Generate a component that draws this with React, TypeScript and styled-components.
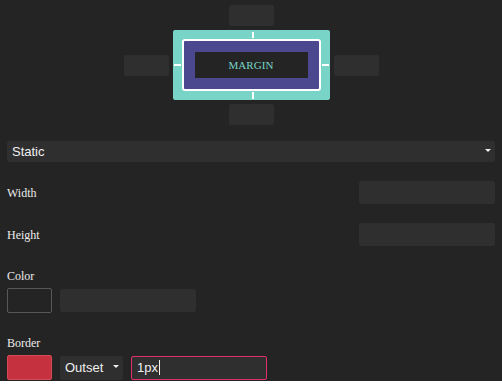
import React from 'react';
import styled, { createGlobalStyle } from 'styled-components';

const GlobalStyle = createGlobalStyle`
  html, body {
    margin: 0;
    padding: 0;
    background: #fff;
  }
  * {
    box-sizing: border-box;
  }
`;

const Panel = styled.div`
  height: 381px;
  overflow: hidden;
  background: #242424;
  padding: 5px 7px 0;
  color: #ececec;
  font-family: "Liberation Serif", "Times New Roman", serif;
`;

const Diagram = styled.div`
  display: flex;
  flex-direction: column;
  align-items: center;
  gap: 4px;
`;

const DiagramRow = styled.div`
  display: flex;
  align-items: center;
  gap: 4px;
`;

const SideBox = styled.div`
  width: 45px;
  height: 21px;
  background: #2f2f2f;
  border-radius: 2px;
`;

const MarginBox = styled.div`
  position: relative;
  width: 157px;
  height: 70px;
  padding: 9px;
  background: #78d4c6;
  border-radius: 2px;
`;

const Tick = styled.div<{ $side: 'top' | 'bottom' | 'left' | 'right' }>`
  position: absolute;
  background: #fff;
  ${({ $side }) => {
    switch ($side) {
      case 'top':
        return 'left: 79px; top: 2px; width: 2px; height: 6px;';
      case 'bottom':
        return 'left: 79px; bottom: 1px; width: 2px; height: 7px;';
      case 'left':
        return 'top: 34px; left: 1px; width: 7px; height: 2px;';
      case 'right':
        return 'top: 34px; right: 1px; width: 7px; height: 2px;';
    }
  }}
`;

const BorderBox = styled.div`
  width: 100%;
  height: 100%;
  border: 2px solid #fff;
  border-radius: 3px;
  background: #4b4890;
  padding: 11px;
`;

const ContentBox = styled.div`
  width: 100%;
  height: 100%;
  background: #242424;
  display: flex;
  align-items: center;
  justify-content: center;
  color: #78d4c6;
  font-size: 11px;
  letter-spacing: 0.1px;
`;

const Select = styled.div<{ $width?: number }>`
  display: flex;
  align-items: center;
  justify-content: space-between;
  width: ${({ $width }) => ($width ? `${$width}px` : '100%')};
  height: ${({ $width }) => ($width ? '24px' : '21px')};
  padding: 0 4px 0 5px;
  background: #2f2f2f;
  border-radius: 2px;
  color: #f0f0f0;
  font-family: "Liberation Sans", Arial, sans-serif;
  font-size: 13px;
  flex-shrink: 0;
`;

const Arrow = styled.span`
  width: 0;
  height: 0;
  border-left: 3px solid transparent;
  border-right: 3px solid transparent;
  border-top: 3px solid #f0f0f0;
  margin-top: -2px;
`;

const PositionSelect = styled(Select)`
  margin-top: 16px;
`;

const FieldRow = styled.div`
  display: flex;
  align-items: center;
  justify-content: space-between;
  margin-top: 19px;
`;

const Label = styled.div`
  font-size: 12px;
  line-height: 14px;
`;

const TextField = styled.div<{ $focused?: boolean }>`
  display: flex;
  align-items: center;
  width: 136px;
  height: ${({ $focused }) => ($focused ? '24px' : '23px')};
  padding: 0 5px;
  background: #2f2f2f;
  border-radius: 2px;
  border: 1px solid ${({ $focused }) => ($focused ? '#e0306a' : '#2f2f2f')};
  color: #f0f0f0;
  font-family: "Liberation Sans", Arial, sans-serif;
  font-size: 13px;
`;

const Caret = styled.span`
  width: 1px;
  height: 15px;
  background: #f0f0f0;
  margin-left: 1px;
`;

const Section = styled.div`
  margin-top: 23px;
`;

const SectionRow = styled.div`
  display: flex;
  align-items: center;
  gap: 8px;
  margin-top: 5px;
`;

const Swatch = styled.div<{ $color: string; $border: string }>`
  width: 45px;
  height: 25px;
  flex-shrink: 0;
  background: ${({ $color }) => $color};
  border: 1px solid ${({ $border }) => $border};
  border-radius: 2px;
`;

const App: React.FC = () => {
  return (
    <>
      <GlobalStyle />
      <Panel>
        <Diagram>
          <SideBox />
          <DiagramRow>
            <SideBox />
            <MarginBox>
              <Tick $side="top" />
              <Tick $side="bottom" />
              <Tick $side="left" />
              <Tick $side="right" />
              <BorderBox>
                <ContentBox>MARGIN</ContentBox>
              </BorderBox>
            </MarginBox>
            <SideBox />
          </DiagramRow>
          <SideBox />
        </Diagram>

        <PositionSelect>
          <span>Static</span>
          <Arrow />
        </PositionSelect>

        <FieldRow>
          <Label>Width</Label>
          <TextField />
        </FieldRow>
        <FieldRow>
          <Label>Height</Label>
          <TextField />
        </FieldRow>

        <Section>
          <Label>Color</Label>
          <SectionRow>
            <Swatch $color="#242424" $border="#585858" />
            <TextField />
          </SectionRow>
        </Section>

        <Section>
          <Label>Border</Label>
          <SectionRow>
            <Swatch $color="#c5313f" $border="#d44a57" />
            <Select $width={63}>
              <span>Outset</span>
              <Arrow />
            </Select>
            <TextField $focused>
              1px
              <Caret />
            </TextField>
          </SectionRow>
        </Section>
      </Panel>
    </>
  );
};

export default App;
